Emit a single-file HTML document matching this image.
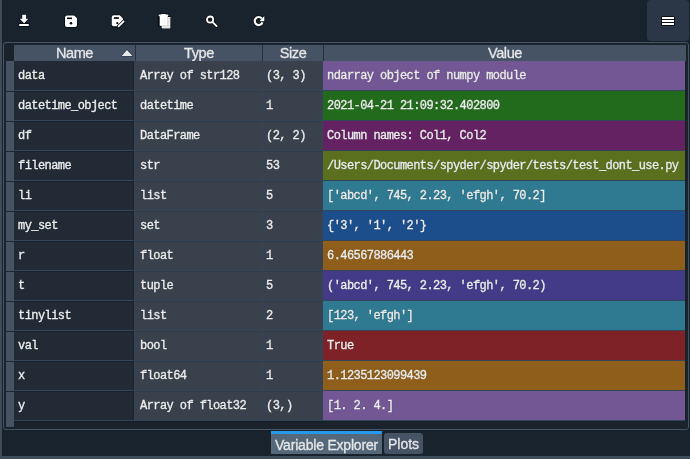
<!DOCTYPE html>
<html><head><meta charset="utf-8"><title>Variable Explorer</title><style>
html,body{margin:0;padding:0}
body{width:690px;height:459px;background:#19232d;position:relative;overflow:hidden;font-family:"Liberation Sans",sans-serif}
.a{position:absolute}
.t{position:absolute;font-family:"Liberation Mono",monospace;font-size:12px;letter-spacing:-0.57px;color:#eceded;white-space:pre;line-height:15px;-webkit-text-stroke:0.35px #eceded;text-shadow:0 0 1px rgba(0,0,0,0.55);will-change:transform}
.h{position:absolute;top:45px;height:16px;color:#e6e7e9;font-size:14.5px;letter-spacing:-0.4px;line-height:16.4px;text-align:center;-webkit-text-stroke:0.3px #e6e7e9;will-change:transform}
.hb{position:absolute;top:45px;height:16px;background:#455364}
</style></head><body>
<div class="a" style="left:0;top:0;width:2px;height:456px;background:#3f4c5a"></div>
<div class="a" style="left:0;top:456px;width:690px;height:3px;background:#3f4c5a"></div>
<div class="a" style="left:647px;top:0;width:42px;height:41px;background:#2b3747;border-radius:4px"></div>
<div class="a" style="left:3px;top:42px;width:684px;height:386px;border:1px solid #455364;border-radius:3px;background:#1a222c"></div>
<div class="a" style="left:6px;top:61px;width:8px;height:366px;background:#455364"></div>
<div class="hb" style="left:14px;width:672px"></div>
<div class="h" style="left:14px;width:121px">Name</div>
<div class="a" style="left:135px;top:45px;width:1px;height:16px;background:#26313e"></div>
<div class="h" style="left:136px;width:126px">Type</div>
<div class="a" style="left:262px;top:45px;width:1px;height:16px;background:#26313e"></div>
<div class="h" style="left:263px;width:60px">Size</div>
<div class="a" style="left:323px;top:45px;width:1px;height:16px;background:#26313e"></div>
<div class="h" style="left:324px;width:362px">Value</div>
<svg class="a" style="left:121px;top:49px;overflow:visible" width="12" height="8" viewBox="0 0 12 8"><path d="M0.5 7 L6 1 L11.5 7 Z" fill="#162a45" stroke="#162a45" stroke-width="1.2" stroke-linejoin="round" opacity="0.8"/><path d="M0.5 6.9 L6 0.9 L11.5 6.9 Z" fill="#e6e7e9"/></svg>
<div class="a" style="left:14px;top:61px;width:120px;height:29px;background:#222a35"></div>
<div class="a" style="left:135px;top:61px;width:127px;height:29px;background:#39424c"></div>
<div class="a" style="left:263px;top:61px;width:59px;height:29px;background:#39424c"></div>
<div class="a" style="left:323px;top:61px;width:362px;height:29px;background:#725794"></div>
<div class="a" style="left:6px;top:91px;width:8px;height:1px;background:#1e2832"></div>
<div class="t" style="left:18px;top:69px">data</div>
<div class="t" style="left:140px;top:69px">Array of str128</div>
<div class="t" style="left:266px;top:69px">(3, 3)</div>
<div class="t" style="left:327px;top:69px">ndarray object of numpy module</div>
<div class="a" style="left:14px;top:91px;width:120px;height:29px;background:#222a35"></div>
<div class="a" style="left:135px;top:91px;width:127px;height:29px;background:#39424c"></div>
<div class="a" style="left:263px;top:91px;width:59px;height:29px;background:#39424c"></div>
<div class="a" style="left:323px;top:91px;width:362px;height:29px;background:#226b1c"></div>
<div class="a" style="left:6px;top:121px;width:8px;height:1px;background:#1e2832"></div>
<div class="t" style="left:18px;top:99px">datetime_object</div>
<div class="t" style="left:140px;top:99px">datetime</div>
<div class="t" style="left:266px;top:99px">1</div>
<div class="t" style="left:327px;top:99px">2021-04-21 21:09:32.402800</div>
<div class="a" style="left:14px;top:121px;width:120px;height:29px;background:#222a35"></div>
<div class="a" style="left:135px;top:121px;width:127px;height:29px;background:#39424c"></div>
<div class="a" style="left:263px;top:121px;width:59px;height:29px;background:#39424c"></div>
<div class="a" style="left:323px;top:121px;width:362px;height:29px;background:#652263"></div>
<div class="a" style="left:6px;top:151px;width:8px;height:1px;background:#1e2832"></div>
<div class="t" style="left:18px;top:129px">df</div>
<div class="t" style="left:140px;top:129px">DataFrame</div>
<div class="t" style="left:266px;top:129px">(2, 2)</div>
<div class="t" style="left:327px;top:129px">Column names: Col1, Col2</div>
<div class="a" style="left:14px;top:151px;width:120px;height:29px;background:#222a35"></div>
<div class="a" style="left:135px;top:151px;width:127px;height:29px;background:#39424c"></div>
<div class="a" style="left:263px;top:151px;width:59px;height:29px;background:#39424c"></div>
<div class="a" style="left:323px;top:151px;width:362px;height:29px;background:#5a701e"></div>
<div class="a" style="left:6px;top:181px;width:8px;height:1px;background:#1e2832"></div>
<div class="t" style="left:18px;top:159px">filename</div>
<div class="t" style="left:140px;top:159px">str</div>
<div class="t" style="left:266px;top:159px">53</div>
<div class="t" style="left:327px;top:159px">/Users/Documents/spyder/spyder/tests/test_dont_use.py</div>
<div class="a" style="left:14px;top:181px;width:120px;height:29px;background:#222a35"></div>
<div class="a" style="left:135px;top:181px;width:127px;height:29px;background:#39424c"></div>
<div class="a" style="left:263px;top:181px;width:59px;height:29px;background:#39424c"></div>
<div class="a" style="left:323px;top:181px;width:362px;height:29px;background:#2f7a90"></div>
<div class="a" style="left:6px;top:211px;width:8px;height:1px;background:#1e2832"></div>
<div class="t" style="left:18px;top:189px">li</div>
<div class="t" style="left:140px;top:189px">list</div>
<div class="t" style="left:266px;top:189px">5</div>
<div class="t" style="left:327px;top:189px">[&#x27;abcd&#x27;, 745, 2.23, &#x27;efgh&#x27;, 70.2]</div>
<div class="a" style="left:14px;top:211px;width:120px;height:29px;background:#222a35"></div>
<div class="a" style="left:135px;top:211px;width:127px;height:29px;background:#39424c"></div>
<div class="a" style="left:263px;top:211px;width:59px;height:29px;background:#39424c"></div>
<div class="a" style="left:323px;top:211px;width:362px;height:29px;background:#1b4e8b"></div>
<div class="a" style="left:6px;top:241px;width:8px;height:1px;background:#1e2832"></div>
<div class="t" style="left:18px;top:219px">my_set</div>
<div class="t" style="left:140px;top:219px">set</div>
<div class="t" style="left:266px;top:219px">3</div>
<div class="t" style="left:327px;top:219px">{&#x27;3&#x27;, &#x27;1&#x27;, &#x27;2&#x27;}</div>
<div class="a" style="left:14px;top:241px;width:120px;height:29px;background:#222a35"></div>
<div class="a" style="left:135px;top:241px;width:127px;height:29px;background:#39424c"></div>
<div class="a" style="left:263px;top:241px;width:59px;height:29px;background:#39424c"></div>
<div class="a" style="left:323px;top:241px;width:362px;height:29px;background:#8f5e1b"></div>
<div class="a" style="left:6px;top:271px;width:8px;height:1px;background:#1e2832"></div>
<div class="t" style="left:18px;top:249px">r</div>
<div class="t" style="left:140px;top:249px">float</div>
<div class="t" style="left:266px;top:249px">1</div>
<div class="t" style="left:327px;top:249px">6.46567886443</div>
<div class="a" style="left:14px;top:271px;width:120px;height:29px;background:#222a35"></div>
<div class="a" style="left:135px;top:271px;width:127px;height:29px;background:#39424c"></div>
<div class="a" style="left:263px;top:271px;width:59px;height:29px;background:#39424c"></div>
<div class="a" style="left:323px;top:271px;width:362px;height:29px;background:#433b88"></div>
<div class="a" style="left:6px;top:301px;width:8px;height:1px;background:#1e2832"></div>
<div class="t" style="left:18px;top:279px">t</div>
<div class="t" style="left:140px;top:279px">tuple</div>
<div class="t" style="left:266px;top:279px">5</div>
<div class="t" style="left:327px;top:279px">(&#x27;abcd&#x27;, 745, 2.23, &#x27;efgh&#x27;, 70.2)</div>
<div class="a" style="left:14px;top:301px;width:120px;height:29px;background:#222a35"></div>
<div class="a" style="left:135px;top:301px;width:127px;height:29px;background:#39424c"></div>
<div class="a" style="left:263px;top:301px;width:59px;height:29px;background:#39424c"></div>
<div class="a" style="left:323px;top:301px;width:362px;height:29px;background:#2f7a90"></div>
<div class="a" style="left:6px;top:331px;width:8px;height:1px;background:#1e2832"></div>
<div class="t" style="left:18px;top:309px">tinylist</div>
<div class="t" style="left:140px;top:309px">list</div>
<div class="t" style="left:266px;top:309px">2</div>
<div class="t" style="left:327px;top:309px">[123, &#x27;efgh&#x27;]</div>
<div class="a" style="left:14px;top:331px;width:120px;height:29px;background:#222a35"></div>
<div class="a" style="left:135px;top:331px;width:127px;height:29px;background:#39424c"></div>
<div class="a" style="left:263px;top:331px;width:59px;height:29px;background:#39424c"></div>
<div class="a" style="left:323px;top:331px;width:362px;height:29px;background:#7e2227"></div>
<div class="a" style="left:6px;top:361px;width:8px;height:1px;background:#1e2832"></div>
<div class="t" style="left:18px;top:339px">val</div>
<div class="t" style="left:140px;top:339px">bool</div>
<div class="t" style="left:266px;top:339px">1</div>
<div class="t" style="left:327px;top:339px">True</div>
<div class="a" style="left:14px;top:361px;width:120px;height:29px;background:#222a35"></div>
<div class="a" style="left:135px;top:361px;width:127px;height:29px;background:#39424c"></div>
<div class="a" style="left:263px;top:361px;width:59px;height:29px;background:#39424c"></div>
<div class="a" style="left:323px;top:361px;width:362px;height:29px;background:#8f5e1b"></div>
<div class="a" style="left:6px;top:391px;width:8px;height:1px;background:#1e2832"></div>
<div class="t" style="left:18px;top:369px">x</div>
<div class="t" style="left:140px;top:369px">float64</div>
<div class="t" style="left:266px;top:369px">1</div>
<div class="t" style="left:327px;top:369px">1.1235123099439</div>
<div class="a" style="left:14px;top:391px;width:120px;height:29px;background:#222a35"></div>
<div class="a" style="left:135px;top:391px;width:127px;height:29px;background:#39424c"></div>
<div class="a" style="left:263px;top:391px;width:59px;height:29px;background:#39424c"></div>
<div class="a" style="left:323px;top:391px;width:362px;height:29px;background:#725794"></div>
<div class="t" style="left:18px;top:399px">y</div>
<div class="t" style="left:140px;top:399px">Array of float32</div>
<div class="t" style="left:266px;top:399px">(3,)</div>
<div class="t" style="left:327px;top:399px">[1. 2. 4.]</div>
<div class="a" style="left:14px;top:90px;width:671px;height:1px;background:#334558"></div>
<div class="a" style="left:14px;top:91px;width:120px;height:1px;background:rgba(0,0,0,0.18)"></div>
<div class="a" style="left:135px;top:91px;width:187px;height:1px;background:rgba(0,0,0,0.10)"></div>
<div class="a" style="left:14px;top:120px;width:671px;height:1px;background:#334558"></div>
<div class="a" style="left:14px;top:121px;width:120px;height:1px;background:rgba(0,0,0,0.18)"></div>
<div class="a" style="left:135px;top:121px;width:187px;height:1px;background:rgba(0,0,0,0.10)"></div>
<div class="a" style="left:14px;top:150px;width:671px;height:1px;background:#334558"></div>
<div class="a" style="left:14px;top:151px;width:120px;height:1px;background:rgba(0,0,0,0.18)"></div>
<div class="a" style="left:135px;top:151px;width:187px;height:1px;background:rgba(0,0,0,0.10)"></div>
<div class="a" style="left:14px;top:180px;width:671px;height:1px;background:#334558"></div>
<div class="a" style="left:14px;top:181px;width:120px;height:1px;background:rgba(0,0,0,0.18)"></div>
<div class="a" style="left:135px;top:181px;width:187px;height:1px;background:rgba(0,0,0,0.10)"></div>
<div class="a" style="left:14px;top:210px;width:671px;height:1px;background:#334558"></div>
<div class="a" style="left:14px;top:211px;width:120px;height:1px;background:rgba(0,0,0,0.18)"></div>
<div class="a" style="left:135px;top:211px;width:187px;height:1px;background:rgba(0,0,0,0.10)"></div>
<div class="a" style="left:14px;top:240px;width:671px;height:1px;background:#334558"></div>
<div class="a" style="left:14px;top:241px;width:120px;height:1px;background:rgba(0,0,0,0.18)"></div>
<div class="a" style="left:135px;top:241px;width:187px;height:1px;background:rgba(0,0,0,0.10)"></div>
<div class="a" style="left:14px;top:270px;width:671px;height:1px;background:#334558"></div>
<div class="a" style="left:14px;top:271px;width:120px;height:1px;background:rgba(0,0,0,0.18)"></div>
<div class="a" style="left:135px;top:271px;width:187px;height:1px;background:rgba(0,0,0,0.10)"></div>
<div class="a" style="left:14px;top:300px;width:671px;height:1px;background:#334558"></div>
<div class="a" style="left:14px;top:301px;width:120px;height:1px;background:rgba(0,0,0,0.18)"></div>
<div class="a" style="left:135px;top:301px;width:187px;height:1px;background:rgba(0,0,0,0.10)"></div>
<div class="a" style="left:14px;top:330px;width:671px;height:1px;background:#334558"></div>
<div class="a" style="left:14px;top:331px;width:120px;height:1px;background:rgba(0,0,0,0.18)"></div>
<div class="a" style="left:135px;top:331px;width:187px;height:1px;background:rgba(0,0,0,0.10)"></div>
<div class="a" style="left:14px;top:360px;width:671px;height:1px;background:#334558"></div>
<div class="a" style="left:14px;top:361px;width:120px;height:1px;background:rgba(0,0,0,0.18)"></div>
<div class="a" style="left:135px;top:361px;width:187px;height:1px;background:rgba(0,0,0,0.10)"></div>
<div class="a" style="left:14px;top:390px;width:671px;height:1px;background:#334558"></div>
<div class="a" style="left:14px;top:391px;width:120px;height:1px;background:rgba(0,0,0,0.18)"></div>
<div class="a" style="left:135px;top:391px;width:187px;height:1px;background:rgba(0,0,0,0.10)"></div>
<div class="a" style="left:14px;top:420px;width:671px;height:1px;background:#334558"></div>
<div class="a" style="left:14px;top:421px;width:120px;height:1px;background:rgba(0,0,0,0.18)"></div>
<div class="a" style="left:135px;top:421px;width:187px;height:1px;background:rgba(0,0,0,0.10)"></div>
<div class="a" style="left:134px;top:61px;width:1px;height:360px;background:#334558"></div>
<div class="a" style="left:262px;top:61px;width:1px;height:360px;background:#334558"></div>
<div class="a" style="left:322px;top:61px;width:1px;height:360px;background:#334558"></div>
<div class="a" style="left:133px;top:61px;width:1px;height:359px;background:rgba(0,0,0,0.15)"></div>
<div class="a" style="left:271px;top:431px;width:111px;height:3px;background:#259ae9"></div>
<div class="a" style="left:271px;top:434px;width:111px;height:20px;background:#54687a"></div>
<div class="a" style="left:271px;top:434px;width:111px;height:20px;color:#e6e7e9;font-size:14px;letter-spacing:-0.2px;line-height:20px;text-align:center;white-space:nowrap;-webkit-text-stroke:0.3px #e6e7e9;will-change:transform"><span style="position:relative;top:1px">Variable Explorer</span></div>
<div class="a" style="left:384px;top:433px;width:39px;height:21px;background:#455364;border-radius:3px"></div>
<div class="a" style="left:384px;top:433px;width:39px;height:21px;color:#e6e7e9;font-size:14px;line-height:21px;text-align:center;white-space:nowrap;-webkit-text-stroke:0.3px #e6e7e9;will-change:transform"><span style="position:relative;top:1px">Plots</span></div>
<svg class="a" style="left:16px;top:13px" width="16" height="16" viewBox="0 0 16 16"><path d="M6.2,1.8H10.1V5.75H12.4L8.15,10.3L3.6,5.75H6.2Z M3.3,11.1H12.7V13.1H3.3Z" fill="#05080c" stroke="#05080c" stroke-width="1.5" stroke-linejoin="round" opacity="0.85"/><path d="M6.2,1.8H10.1V5.75H12.4L8.15,10.3L3.6,5.75H6.2Z M3.3,11.1H12.7V13.1H3.3Z" fill="#fff"/></svg>
<svg class="a" style="left:63px;top:13px" width="16" height="16" viewBox="0 0 16 16"><path d="M4,2.4H11.2L14,5.2V12Q14,14 12,14H4Q2,14 2,12V4.4Q2,2.4 4,2.4Z" fill="#05080c" stroke="#05080c" stroke-width="1.5" stroke-linejoin="round" opacity="0.85"/><path d="M4,2.4H11.2L14,5.2V12Q14,14 12,14H4Q2,14 2,12V4.4Q2,2.4 4,2.4Z" fill="#fff"/><rect x="4" y="4.5" width="5" height="1.6" fill="#05080c"/><circle cx="8" cy="10.3" r="1.3" fill="#05080c"/></svg>
<svg class="a" style="left:109px;top:13px" width="16" height="16" viewBox="0 0 16 16"><path d="M4.75,2.3H10.8L14,5.5V7.8L8.6,13.8H4.75Q2.75,13.8 2.75,11.8V4.3Q2.75,2.3 4.75,2.3Z" fill="#05080c" stroke="#05080c" stroke-width="1.4" stroke-linejoin="round" opacity="0.85"/><path d="M4.75,2.3H10.8L14,5.5V7.6L8.4,13.3H4.75Q2.75,13.3 2.75,11.3V4.3Q2.75,2.3 4.75,2.3Z" fill="#fff"/><rect x="4.9" y="4.2" width="5" height="1.7" fill="#05080c"/><circle cx="8.3" cy="10.2" r="1.1" fill="#05080c"/><path d="M9.4,13.6L14.8,8.1" stroke="#05080c" stroke-width="3.2" stroke-linecap="round"/><path d="M9.6,13.4L14.6,8.3" stroke="#fff" stroke-width="1.8" stroke-linecap="round"/></svg>
<svg class="a" style="left:156px;top:13px" width="16" height="16" viewBox="0 0 16 16"><rect x="4.9" y="3.3" width="10" height="12.5" rx="1" fill="#05080c" opacity="0.85"/><rect x="1.9" y="0.6" width="11" height="13" rx="1" fill="#05080c" opacity="0.85"/><rect x="5.6" y="4.2" width="8.8" height="11.3" rx="0.8" fill="#e4e4e4"/><rect x="11.2" y="3.9" width="3.4" height="1.1" rx="0.4" fill="#e8e8e8"/><rect x="3.8" y="3" width="8" height="9.9" fill="#bdbdbd"/><rect x="3.8" y="3" width="7.6" height="9.5" fill="#fff"/><rect x="5.6" y="4.5" width="0.7" height="7" fill="#ebebeb"/><rect x="8.5" y="4.5" width="0.7" height="7" fill="#ebebeb"/><rect x="2.6" y="1.4" width="9.8" height="1.9" rx="0.7" fill="#fff"/><rect x="5.2" y="0.9" width="4.6" height="1" rx="0.4" fill="#fff"/></svg>
<svg class="a" style="left:204px;top:13px" width="16" height="16" viewBox="0 0 16 16"><circle cx="6.1" cy="6.6" r="3.1" fill="none" stroke="#05080c" stroke-width="3.2" opacity="0.85"/><path d="M8.8,9.3L12.6,13.1" stroke="#05080c" stroke-width="3.3" stroke-linecap="round" opacity="0.85"/><circle cx="6.1" cy="6.6" r="3.1" fill="none" stroke="#fff" stroke-width="1.8"/><path d="M8.8,9.3L12.6,13.1" stroke="#fff" stroke-width="1.9" stroke-linecap="round"/></svg>
<svg class="a" style="left:251px;top:13px" width="16" height="16" viewBox="0 0 16 16"><path d="M10.76,5.43A4.0,4.0 0 1,0 11.46,9.37" fill="none" stroke="#05080c" stroke-width="3.6" opacity="0.85"/><path d="M13.3,3.0V8.3H8.4Z" fill="#05080c" stroke="#05080c" stroke-width="1.4" stroke-linejoin="round" opacity="0.85"/><path d="M10.76,5.43A4.0,4.0 0 1,0 11.46,9.37" fill="none" stroke="#fff" stroke-width="2.2"/><path d="M13.3,3.0V8.3H8.4Z" fill="#fff"/></svg>
<div class="a" style="left:661.2px;top:16.4px;width:13.8px;height:9.2px;background:#05080c;border-radius:1.5px;opacity:0.85"></div>
<div class="a" style="left:662.2px;top:17.3px;width:11.9px;height:1.6px;background:#fff"></div>
<div class="a" style="left:662.2px;top:20.2px;width:11.9px;height:1.6px;background:#fff"></div>
<div class="a" style="left:662.2px;top:23.2px;width:11.9px;height:1.6px;background:#fff"></div>
</body></html>
